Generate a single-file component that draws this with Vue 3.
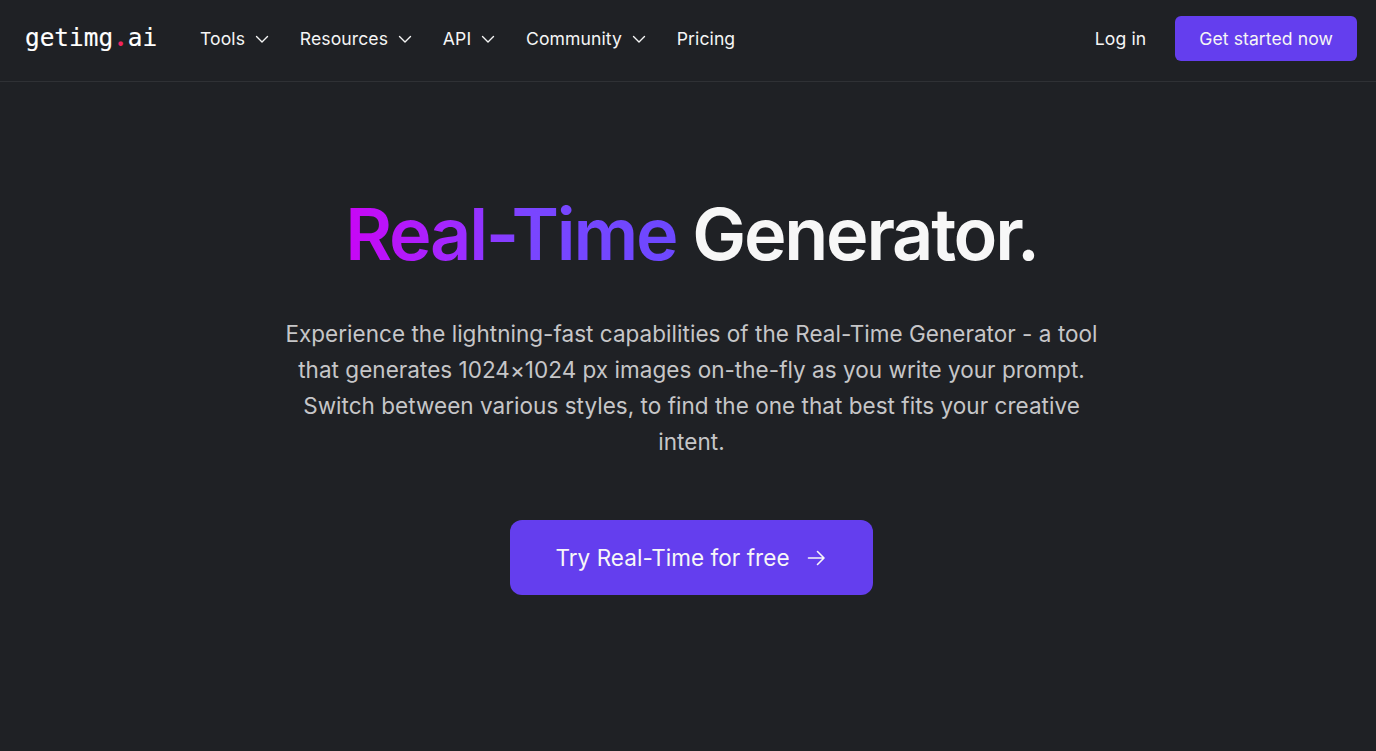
<template>
  <div class="page">
    <header class="topbar">
      <a class="logo">getimg<span class="dot">.</span>ai</a>
      <nav class="nav">
        <a v-for="item in navItems" :key="item.label" class="nav-link">
          {{ item.label }}
          <svg v-if="item.menu" class="chevron" width="16" height="16" viewBox="0 0 16 16" fill="none">
            <path d="M2.5 5.5 8 11l5.5-5.5" stroke="currentColor" stroke-width="1.4" stroke-linecap="round" stroke-linejoin="round" />
          </svg>
        </a>
      </nav>
      <div class="actions">
        <a class="login">Log in</a>
        <a class="btn-small">Get started now</a>
      </div>
    </header>

    <main class="hero">
      <h1 class="title"><span class="grad">Real-Time</span> Generator.</h1>
      <p class="lead">
        Experience the lightning-fast capabilities of the Real-Time Generator - a tool that generates 1024×1024 px images on-the-fly as you write your prompt. Switch between various styles, to find the one that best fits your creative intent.
      </p>
      <a class="btn-large">
        Try Real-Time for free
        <svg class="arrow" width="24" height="24" viewBox="0 0 24 24" fill="none">
          <path d="M4.5 12h15M13.500 5.500 20 12l-6.500 6.500" stroke="currentColor" stroke-width="1.6" stroke-linecap="round" stroke-linejoin="round" />
        </svg>
      </a>
    </main>
  </div>
</template>

<script setup>
const navItems = [
  { label: 'Tools', menu: true },
  { label: 'Resources', menu: true },
  { label: 'API', menu: true },
  { label: 'Community', menu: true },
  { label: 'Pricing', menu: false }
]
</script>

<style>
body {
  background: #1f2125;
}
</style>

<style scoped>
.page {
  min-height: 751px;
  background: #1f2125;
  font-family: Inter, "Liberation Sans", sans-serif;
  color: #fff;
}

.topbar {
  display: flex;
  align-items: center;
  height: 77px;
  padding: 0 19px 4px 25px;
  border-bottom: 1px solid #2f3135;
}

.logo {
  font-family: "DejaVu Sans Mono", "Liberation Mono", monospace;
  font-size: 24.4px;
  line-height: 30px;
  color: #fff;
  width: 175px;
  margin-top: -1px;
  -webkit-text-stroke: 0.15px #fff;
}

.dot {
  display: inline-block;
  width: 14.7px;
  font-family: Lato, sans-serif;
  font-size: 30px;
  font-weight: 700;
  line-height: 0;
  text-align: center;
  color: #f0245f;
  -webkit-text-stroke: 0;
}

.nav {
  display: flex;
  align-items: center;
  gap: 29.8px;
}

.nav-link {
  display: flex;
  align-items: center;
  gap: 9px;
  font-size: 17.6px;
  letter-spacing: 0.08px;
  line-height: 24px;
  color: #f5f5f5;
}

.chevron {
  color: #f5f5f5;
}

.actions {
  margin-left: auto;
  display: flex;
  align-items: center;
  gap: 29px;
}

.login {
  font-size: 17.6px;
  letter-spacing: 0.08px;
  line-height: 24px;
  color: #f5f5f5;
}

.btn-small {
  display: flex;
  align-items: center;
  height: 45px;
  padding: 0 24px;
  background: #643eee;
  border-radius: 6px;
  font-size: 17.6px;
  letter-spacing: 0.08px;
  color: #f5f5f5;
}

.hero {
  display: flex;
  flex-direction: column;
  align-items: center;
  padding-top: 112px;
  padding-left: 7px;
}

.title {
  margin: 0;
  font-size: 72px;
  line-height: 80px;
  font-weight: 600;
  letter-spacing: -2.25px;
  color: #f7f7f7;
}

.grad {
  background: linear-gradient(90deg, #c905f5 0%, #a526ff 30%, #7a45ff 55%, #6d48ff 100%);
  -webkit-background-clip: text;
  background-clip: text;
  color: transparent;
}

.lead {
  margin: 42px 0 0;
  width: 830px;
  text-align: center;
  font-size: 22.5px;
  letter-spacing: 0.03px;
  line-height: 36px;
  color: #c6c6c8;
}

.btn-large {
  margin-top: 60px;
  display: flex;
  align-items: center;
  gap: 14px;
  height: 75px;
  padding: 0 45px;
  background: #643eee;
  border-radius: 12px;
  font-size: 22.5px;
  letter-spacing: 0.05px;
  color: #f7f7f7;
}

.arrow {
  margin-top: 1px;
}
</style>
